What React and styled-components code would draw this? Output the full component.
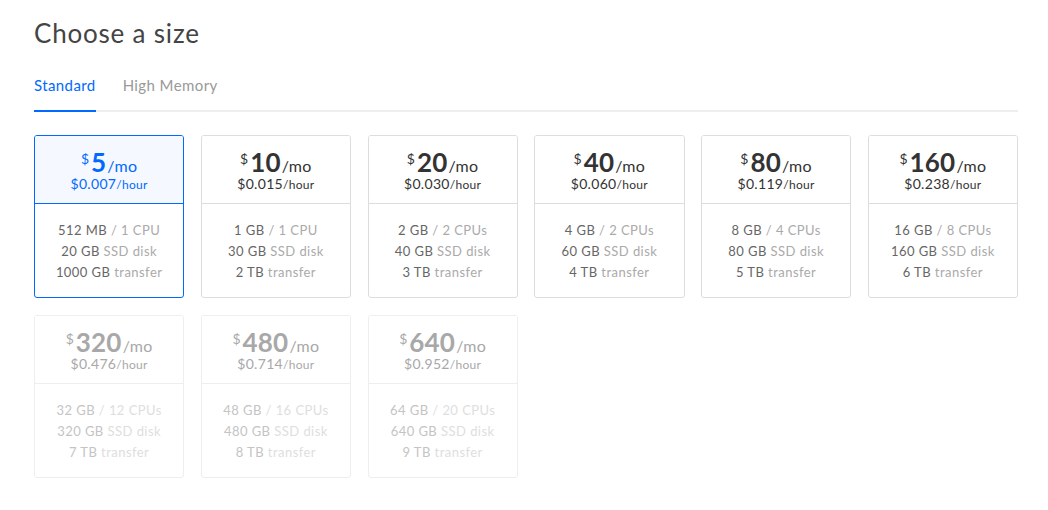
import React from "react";
import styled, { createGlobalStyle } from "styled-components";

const Global = createGlobalStyle`
  html, body { margin: 0; padding: 0; background: #fff; }
  body { font-family: Lato, "Open Sans", sans-serif; -webkit-font-smoothing: antialiased; }
`;

const Page = styled.div`
  padding: 16px 30px 0 34px;
  width: 984px;
`;

const Title = styled.h1`
  margin: 0;
  font-size: 26px;
  font-weight: 400;
  color: #444;
  line-height: 34px;
  letter-spacing: 0.8px;
`;

const Tabs = styled.div`
  display: flex;
  gap: 27px;
  margin-top: 25px;
  border-bottom: 2px solid #eeeeee;
`;

const Tab = styled.div`
  font-size: 15px;
  line-height: 20px;
  letter-spacing: 0.4px;
  padding-bottom: 15px;
  margin-bottom: -2px;
  color: ${(p) => (p.$active ? "#0069ff" : "#999")};
  border-bottom: 2px solid ${(p) => (p.$active ? "#0069ff" : "transparent")};
`;

const Grid = styled.div`
  display: grid;
  grid-template-columns: repeat(6, 1fr);
  column-gap: 16.5px;
  row-gap: 17px;
  margin-top: 23px;
`;

const Card = styled.div`
  display: flex;
  flex-direction: column;
  height: 163px;
  box-sizing: border-box;
  border: 1px solid ${(p) => (p.$selected ? "#0069ff" : p.$disabled ? "#eeeeee" : "#dddddd")};
  border-radius: 3px;
  overflow: hidden;
`;

const Head = styled.div`
  height: 68px;
  display: flex;
  flex-direction: column;
  align-items: center;
  justify-content: center;
  padding-top: 3px;
  box-sizing: border-box;
  background: ${(p) => (p.$selected ? "#f5f9ff" : "#fff")};
  border-bottom: 1px solid ${(p) => (p.$selected ? "#0069ff" : p.$disabled ? "#eeeeee" : "#dddddd")};
  color: ${(p) => (p.$selected ? "#0069ff" : p.$disabled ? "#a8a8a8" : "#333")};
`;

const Price = styled.div`
  display: flex;
  align-items: baseline;
  line-height: 26px;
  height: 26px;
`;

const Dollar = styled.span`
  font-size: 14px;
  align-self: flex-start;
  margin-top: -3px;
  margin-right: 2px;
`;

const Amount = styled.span`
  font-size: 26px;
  font-weight: 700;
  letter-spacing: 0.2px;
`;

const Mo = styled.span`
  font-size: 16px;
  margin-left: 1px;
  letter-spacing: 0.3px;
`;

const Hourly = styled.div`
  font-size: 14px;
  line-height: 18px;
  margin-top: 0px;
  letter-spacing: 0.3px;
`;

const Small = styled.span`
  font-size: 12px;
`;

const Body = styled.div`
  flex: 1;
  display: flex;
  flex-direction: column;
  align-items: center;
  justify-content: center;
  padding-top: 1px;
  font-size: 13px;
  line-height: 21px;
  letter-spacing: 0.45px;
`;

const Line = styled.div`
  color: ${(p) => (p.$disabled ? "#c4c4c4" : "#666")};
`;

const Dim = styled.span`
  color: ${(p) => (p.$disabled ? "#dedede" : "#aaa")};
`;

const plans = [
  { mo: "5", hr: "0.007", ram: "512 MB", cpu: "1 CPU", disk: "20 GB", tr: "1000 GB", selected: true },
  { mo: "10", hr: "0.015", ram: "1 GB", cpu: "1 CPU", disk: "30 GB", tr: "2 TB" },
  { mo: "20", hr: "0.030", ram: "2 GB", cpu: "2 CPUs", disk: "40 GB", tr: "3 TB" },
  { mo: "40", hr: "0.060", ram: "4 GB", cpu: "2 CPUs", disk: "60 GB", tr: "4 TB" },
  { mo: "80", hr: "0.119", ram: "8 GB", cpu: "4 CPUs", disk: "80 GB", tr: "5 TB" },
  { mo: "160", hr: "0.238", ram: "16 GB", cpu: "8 CPUs", disk: "160 GB", tr: "6 TB" },
  { mo: "320", hr: "0.476", ram: "32 GB", cpu: "12 CPUs", disk: "320 GB", tr: "7 TB", disabled: true },
  { mo: "480", hr: "0.714", ram: "48 GB", cpu: "16 CPUs", disk: "480 GB", tr: "8 TB", disabled: true },
  { mo: "640", hr: "0.952", ram: "64 GB", cpu: "20 CPUs", disk: "640 GB", tr: "9 TB", disabled: true },
];

export default function App() {
  return (
    <Page>
      <Global />
      <Title>Choose a size</Title>
      <Tabs>
        <Tab $active>Standard</Tab>
        <Tab>High Memory</Tab>
      </Tabs>
      <Grid>
        {plans.map((p) => (
          <Card key={p.mo} $selected={p.selected} $disabled={p.disabled}>
            <Head $selected={p.selected} $disabled={p.disabled}>
              <Price>
                <Dollar>$</Dollar>
                <Amount>{p.mo}</Amount>
                <Mo>/mo</Mo>
              </Price>
              <Hourly>
                ${p.hr}
                <Small>/hour</Small>
              </Hourly>
            </Head>
            <Body>
              <Line $disabled={p.disabled}>
                {p.ram} <Dim $disabled={p.disabled}>/ {p.cpu}</Dim>
              </Line>
              <Line $disabled={p.disabled}>
                {p.disk} <Dim $disabled={p.disabled}>SSD disk</Dim>
              </Line>
              <Line $disabled={p.disabled}>
                {p.tr} <Dim $disabled={p.disabled}>transfer</Dim>
              </Line>
            </Body>
          </Card>
        ))}
      </Grid>
    </Page>
  );
}
